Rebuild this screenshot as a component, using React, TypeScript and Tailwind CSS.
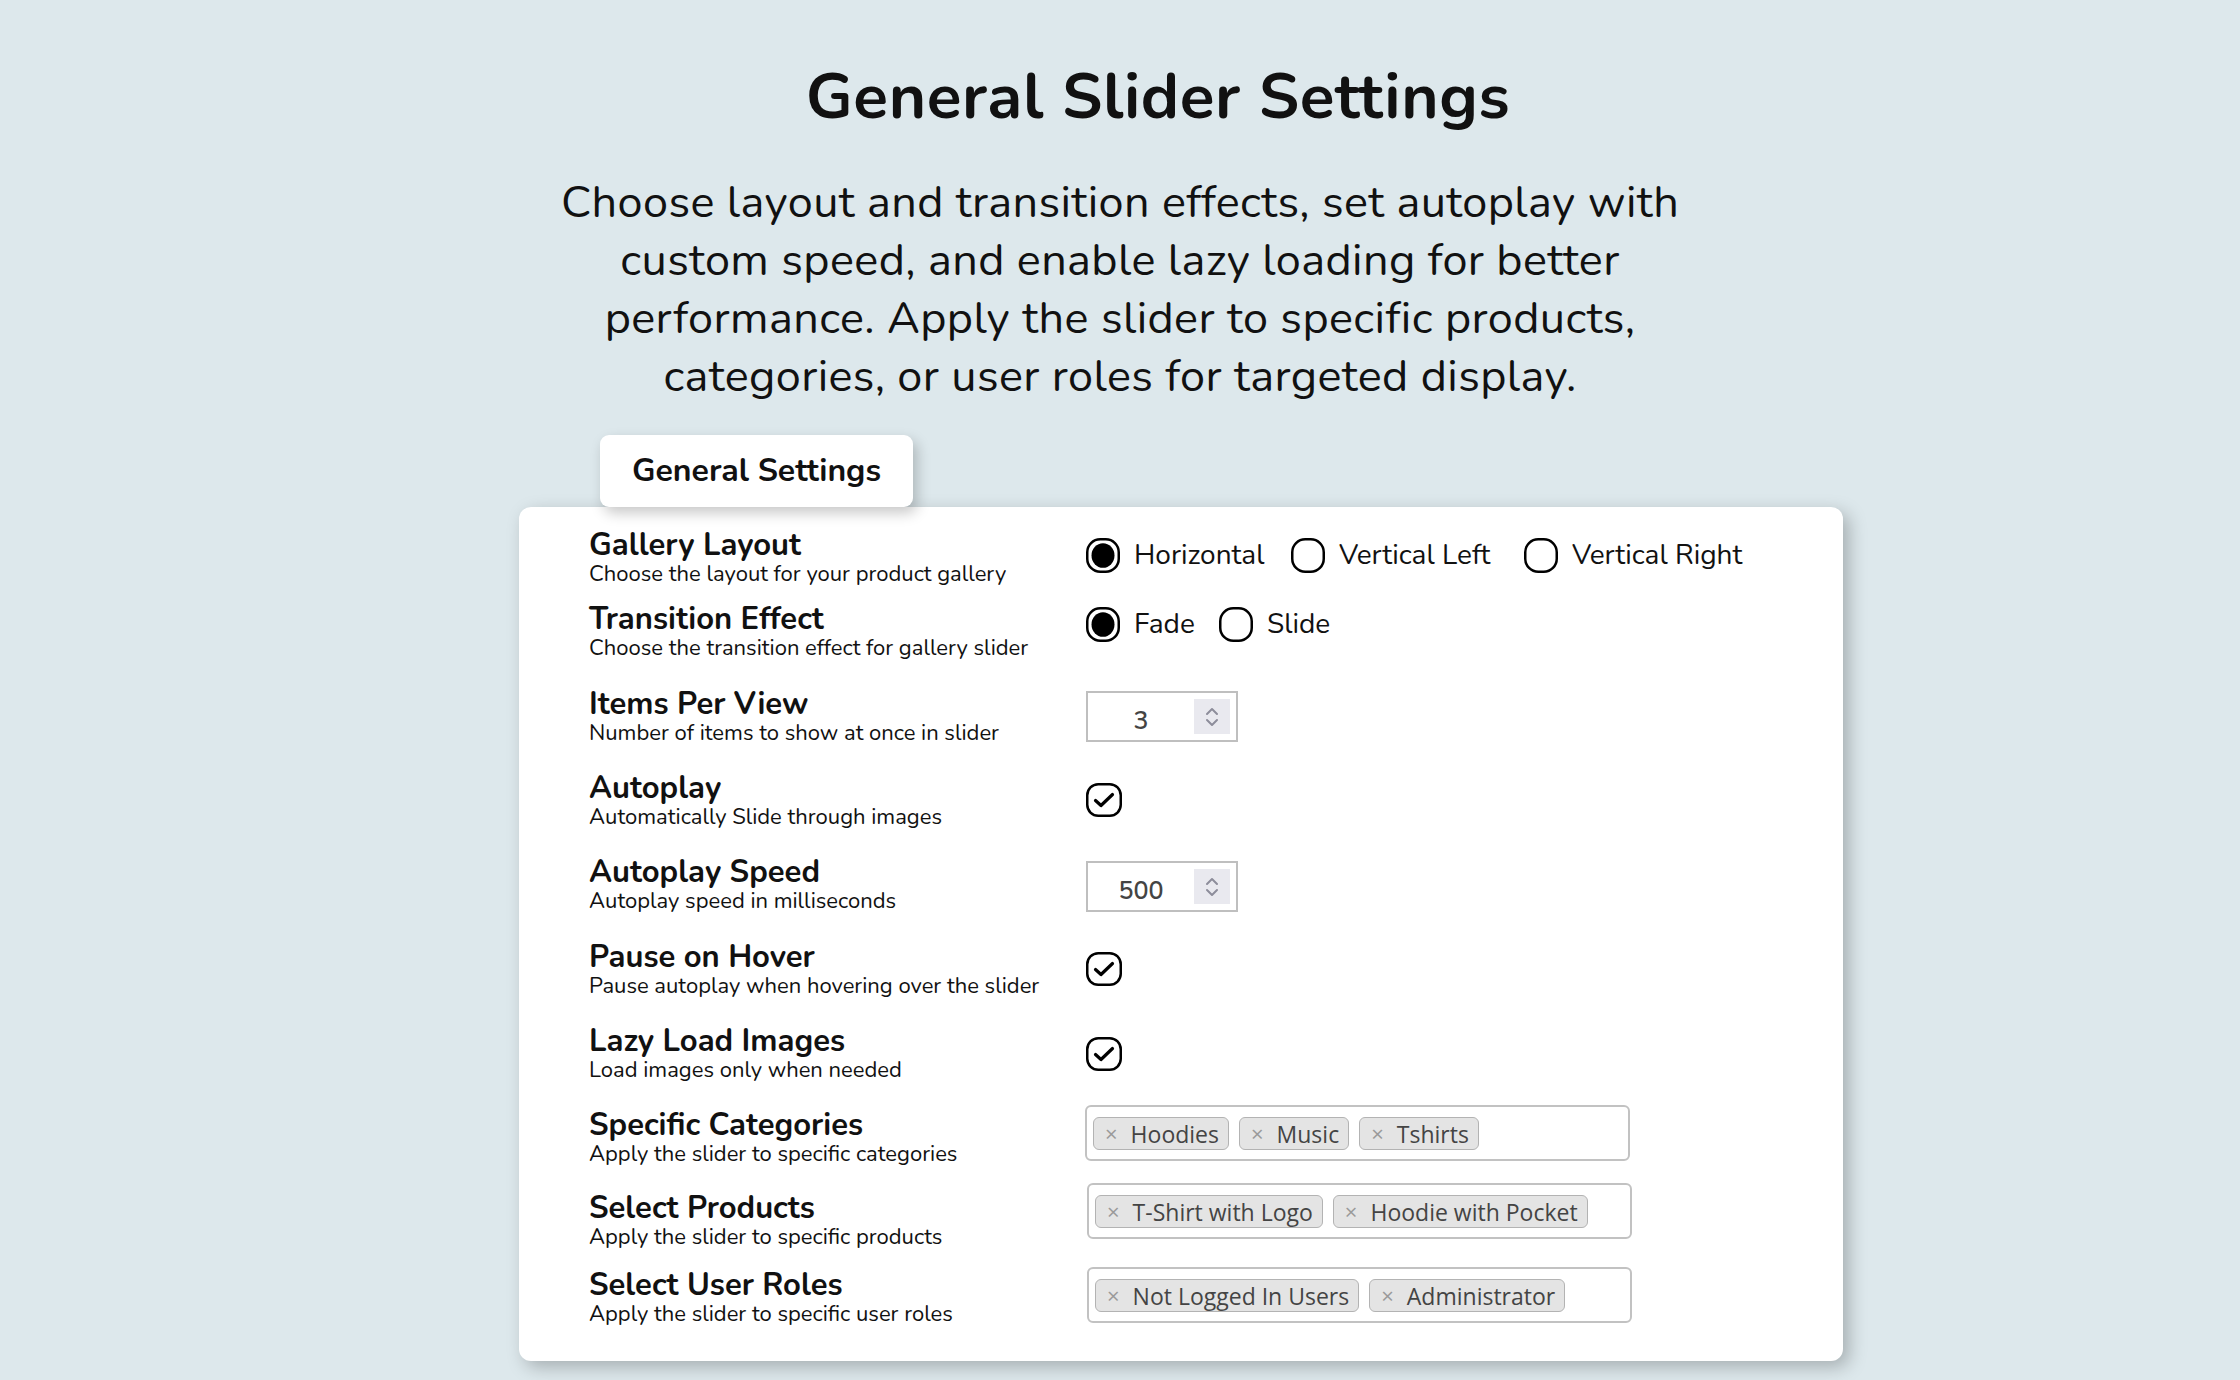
import React from 'react';

const SANS = "font-['Nunito','Lato','Noto_Sans',sans-serif]";

const Radio: React.FC<{ checked?: boolean }> = ({ checked }) => (
  <svg width="34" height="35" viewBox="0 0 34 35" className="shrink-0">
    <rect x="1.25" y="1.25" width="31.5" height="32.5" rx="13" fill="white" stroke="black" strokeWidth="2.5" />
    {checked && <ellipse cx="17" cy="17.5" rx="11.5" ry="12.3" fill="black" />}
  </svg>
);

const Checkbox: React.FC = () => (
  <svg width="36" height="34" viewBox="0 0 36 34" className="shrink-0">
    <rect x="1.25" y="1.25" width="33.5" height="31.5" rx="11" fill="white" stroke="black" strokeWidth="2.5" />
    <path d="M9.5 17.5 L15 22.5 L26.5 11.5" fill="none" stroke="black" strokeWidth="3.2" strokeLinecap="round" strokeLinejoin="round" />
  </svg>
);

const NumberInput: React.FC<{ value: string }> = ({ value }) => (
  <div className="flex h-[51px] w-[152px] items-center border-2 border-[#bfbfbf] bg-white pr-[6px]">
    <span className={`${SANS} flex-1 pt-[10px] text-center text-[25px] font-semibold text-[#444]`}>{value}</span>
    <div className="flex h-[35px] w-[36px] items-center justify-center bg-[#e9e9ef]">
      <svg width="16" height="26" viewBox="0 0 16 26">
        <path d="M3 10 L8 5 L13 10" fill="none" stroke="#8d8d9b" strokeWidth="2" strokeLinecap="round" strokeLinejoin="round" />
        <path d="M3 16 L8 21 L13 16" fill="none" stroke="#8d8d9b" strokeWidth="2" strokeLinecap="round" strokeLinejoin="round" />
      </svg>
    </div>
  </div>
);

const MultiSelect: React.FC<{ tags: string[]; className?: string }> = ({ tags, className }) => (
  <div className={`flex h-[56px] w-[545px] items-center gap-[10px] rounded-[6px] border-2 border-[#c2c2c2] bg-white pl-[6px] ${className ?? ''}`}>
    {tags.map((t) => (
      <div
        key={t}
        className="flex h-[33px] items-center rounded-[6px] border border-[#b3b3b3] bg-[#e4e4e4] pl-[11px] pr-[9px] font-['Open_Sans',sans-serif] text-[#444]"
      >
        <span className="mr-[13px] text-[22px] leading-none text-[#9a9a9a]">×</span>
        <span className="pt-[2px] text-[23px] leading-none">{t}</span>
      </div>
    ))}
  </div>
);

type Row = {
  title: string;
  desc: string;
  height: string;
  offset: string;
  control: React.ReactNode;
};

const rows: Row[] = [
  {
    title: 'Gallery Layout',
    desc: 'Choose the layout for your product gallery',
    height: 'h-[74px]',
    offset: 'mt-[4px]',
    control: (
      <div className="flex items-center">
        <label className="flex w-[205px] items-center gap-[14px]">
          <Radio checked />
          <span className="text-[28px]">Horizontal</span>
        </label>
        <label className="flex w-[233px] items-center gap-[14px]">
          <Radio />
          <span className="text-[28px]">Vertical Left</span>
        </label>
        <label className="flex items-center gap-[14px]">
          <Radio />
          <span className="text-[28px]">Vertical Right</span>
        </label>
      </div>
    ),
  },
  {
    title: 'Transition Effect',
    desc: 'Choose the transition effect for gallery slider',
    height: 'h-[85px]',
    offset: '-mt-[1px]',
    control: (
      <div className="flex items-center">
        <label className="flex w-[133px] items-center gap-[14px]">
          <Radio checked />
          <span className="text-[28px]">Fade</span>
        </label>
        <label className="flex items-center gap-[14px]">
          <Radio />
          <span className="text-[28px]">Slide</span>
        </label>
      </div>
    ),
  },
  {
    title: 'Items Per View',
    desc: 'Number of items to show at once in slider',
    height: 'h-[84px]',
    offset: 'mt-[2px]',
    control: <NumberInput value="3" />,
  },
  {
    title: 'Autoplay',
    desc: 'Automatically Slide through images',
    height: 'h-[84px]',
    offset: 'mt-[10px]',
    control: <Checkbox />,
  },
  {
    title: 'Autoplay Speed',
    desc: 'Autoplay speed in milliseconds',
    height: 'h-[85px]',
    offset: 'mt-[4px]',
    control: <NumberInput value="500" />,
  },
  {
    title: 'Pause on Hover',
    desc: 'Pause autoplay when hovering over the slider',
    height: 'h-[84px]',
    offset: 'mt-[10px]',
    control: <Checkbox />,
  },
  {
    title: 'Lazy Load Images',
    desc: 'Load images only when needed',
    height: 'h-[84px]',
    offset: 'mt-[11px]',
    control: <Checkbox />,
  },
  {
    title: 'Specific Categories',
    desc: 'Apply the slider to specific categories',
    height: 'h-[83px]',
    offset: '-mt-[5px]',
    control: <MultiSelect tags={['Hoodies', 'Music', 'Tshirts']} className="-ml-[1px]" />,
  },
  {
    title: 'Select Products',
    desc: 'Apply the slider to specific products',
    height: 'h-[77px]',
    offset: '-mt-[10px]',
    control: <MultiSelect tags={['T-Shirt with Logo', 'Hoodie with Pocket']} className="ml-[1px]" />,
  },
  {
    title: 'Select User Roles',
    desc: 'Apply the slider to specific user roles',
    height: 'h-[91px]',
    offset: '-mt-[3px]',
    control: <MultiSelect tags={['Not Logged In Users', 'Administrator']} className="ml-[1px]" />,
  },
];

const App: React.FC = () => {
  return (
    <div className={`${SANS} min-h-[1380px] w-full bg-[#dde8ec] text-[#111]`}>
      <h1 className="pt-[58px] pl-[76px] text-center text-[64px] font-bold leading-[78px] tracking-[0.6px]">
        General Slider Settings
      </h1>
      <p className="mt-[38px] text-center text-[45px] leading-[58px] tracking-[0.4px]">
        Choose layout and transition effects, set autoplay with
        <br />
        custom speed, and enable lazy loading for better
        <br />
        performance. Apply the slider to specific products,
        <br />
        categories, or user roles for targeted display.
      </p>

      <div className="relative z-10 mt-[29px] ml-[600px] flex h-[72px] w-[313px] items-center justify-center rounded-[9px] bg-white shadow-[4px_6px_14px_rgba(0,0,0,0.22)]">
        <span className="text-[32px] font-bold">General Settings</span>
      </div>

      <div className="ml-[519px] w-[1324px] rounded-[12px] bg-white pt-[23px] pl-[70px] shadow-[6px_6px_18px_rgba(0,0,0,0.25)]">
        {rows.map((r) => (
          <div key={r.title} className={`flex items-start ${r.height}`}>
            <div className="w-[497px] shrink-0">
              <div className="text-[31px] font-bold leading-[30px]">{r.title}</div>
              <div className="pt-[2px] text-[22px] leading-[24px] text-[#111]">{r.desc}</div>
            </div>
            <div className={r.offset}>{r.control}</div>
          </div>
        ))}
      </div>
    </div>
  );
};

export default App;
